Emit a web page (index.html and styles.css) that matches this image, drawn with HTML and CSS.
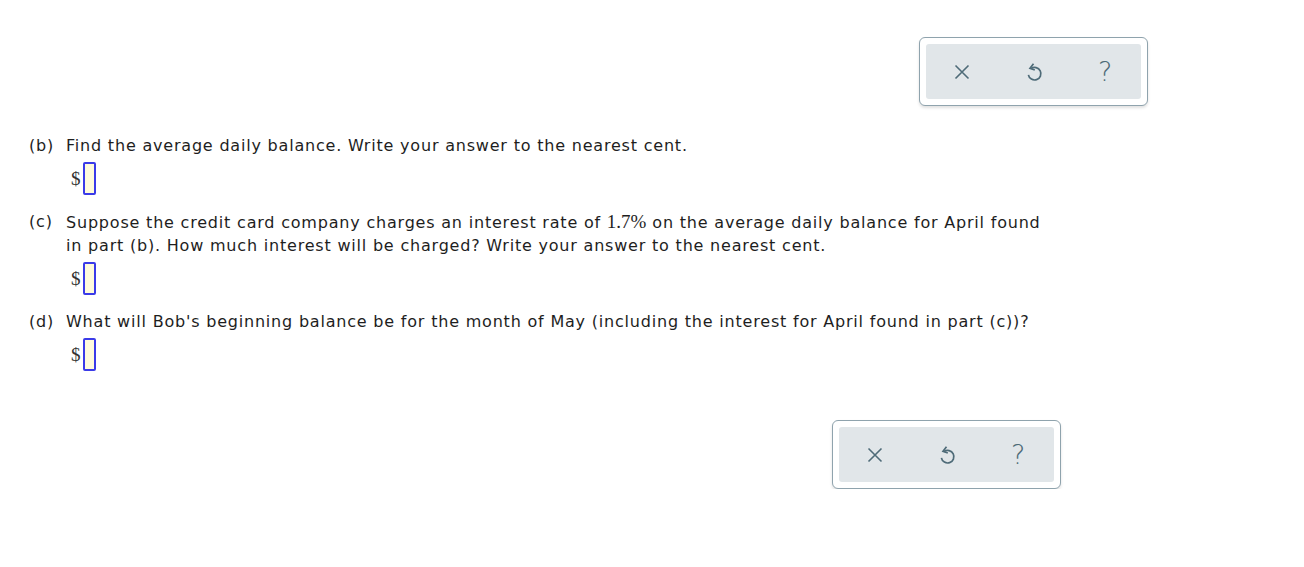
FILE: index.html
```html
<!DOCTYPE html>
<html lang="en">
<head>
    <meta charset="UTF-8">
    <title>Average daily balance</title>
    <link rel="stylesheet" href="styles.css">
</head>
<body>
    <div class="page">
        <div class="tools-row top">
            <div class="tool-panel">
                <div class="tool-bar">
                    <button class="tool-btn" title="Clear">
                        <svg width="16" height="16" viewBox="0 0 16 16"><path d="M1.5 1.5 L14.5 14.5 M14.5 1.5 L1.5 14.5" stroke="#4e6b78" stroke-width="1.6" fill="none"/></svg>
                    </button>
                    <button class="tool-btn" title="Undo">
                        <svg width="18" height="20" viewBox="0 0 18 20"><path d="M6 6.5 A6.3 6.3 0 1 1 3.4 12.8" stroke="#4e6b78" stroke-width="1.7" fill="none"/><path d="M8.5 1.8 L5 6.3 L9.8 8" stroke="#4e6b78" stroke-width="1.7" fill="none"/></svg>
                    </button>
                    <button class="tool-btn help" title="Help">?</button>
                </div>
            </div>
        </div>

        <div class="part">
            <div class="question">
                <span class="label">(b)</span>
                <span class="text">Find the average daily balance. Write your answer to the nearest cent.</span>
            </div>
            <div class="answer"><span class="dollar">$</span><span class="input-box"></span></div>
        </div>

        <div class="part">
            <div class="question">
                <span class="label">(c)</span>
                <span class="text">Suppose the credit card company charges an interest rate of <span class="math">1.7%</span> on the average daily balance for April found in part (b). How much interest will be charged? Write your answer to the nearest cent.</span>
            </div>
            <div class="answer"><span class="dollar">$</span><span class="input-box"></span></div>
        </div>

        <div class="part">
            <div class="question">
                <span class="label">(d)</span>
                <span class="text">What will Bob's beginning balance be for the month of May (including the interest for April found in part (c))?</span>
            </div>
            <div class="answer"><span class="dollar">$</span><span class="input-box"></span></div>
        </div>

        <div class="tools-row bottom">
            <div class="tool-panel">
                <div class="tool-bar">
                    <button class="tool-btn" title="Clear">
                        <svg width="16" height="16" viewBox="0 0 16 16"><path d="M1.5 1.5 L14.5 14.5 M14.5 1.5 L1.5 14.5" stroke="#4e6b78" stroke-width="1.6" fill="none"/></svg>
                    </button>
                    <button class="tool-btn" title="Undo">
                        <svg width="18" height="20" viewBox="0 0 18 20"><path d="M6 6.5 A6.3 6.3 0 1 1 3.4 12.8" stroke="#4e6b78" stroke-width="1.7" fill="none"/><path d="M8.5 1.8 L5 6.3 L9.8 8" stroke="#4e6b78" stroke-width="1.7" fill="none"/></svg>
                    </button>
                    <button class="tool-btn help" title="Help">?</button>
                </div>
            </div>
        </div>
    </div>
</body>
</html>
```

FILE: styles.css
```css
/* Question page */
body {
    margin: 0;
    background-color: #fff;
    font-family: "DejaVu Sans", Verdana, sans-serif;
    font-size: 16px;
    letter-spacing: 0.8px;
    color: #1e1e1e;
}

.page {
    padding: 0 0 0 29px;
}

.tools-row {
    display: flex;
}

.tools-row.top {
    padding: 37px 0 0 890px;
    margin-bottom: 28px;
}

.tools-row.bottom {
    padding: 34px 0 0 803px;
}

.tool-panel {
    width: 229px;
    height: 69px;
    padding: 6px;
    box-sizing: border-box;
    border: 1px solid #8fa3ad;
    border-radius: 6px;
    box-shadow: 0 2px 3px rgba(0, 0, 0, 0.12);
    background-color: #fff;
}

.tool-bar {
    height: 100%;
    background-color: #e1e6e9;
    border-radius: 3px;
    display: flex;
    align-items: center;
}

.tool-btn {
    flex: 1;
    border: none;
    background: none;
    padding: 0;
    height: 30px;
    display: flex;
    align-items: center;
    justify-content: center;
}

.tool-btn.help {
    font-family: "DejaVu Sans", sans-serif;
    font-size: 27px;
    font-weight: 200;
    letter-spacing: 0;
    color: #4e6b78;
}

.part {
    margin-bottom: 15px;
}

.question {
    display: flex;
    line-height: 23px;
}

.question .label {
    flex: 0 0 37px;
}

.question .text {
    width: 995px;
}

.math {
    font-family: "Liberation Serif", "Times New Roman", serif;
    font-size: 19px;
    letter-spacing: 0;
}

.answer {
    display: flex;
    align-items: center;
    padding: 5px 0 0 42px;
}

.dollar {
    font-family: "Liberation Serif", "Times New Roman", serif;
    font-size: 19px;
    letter-spacing: 0;
    color: #333;
    margin-right: 2px;
}

.input-box {
    display: inline-block;
    width: 9px;
    height: 29px;
    border: 2px solid #3b3be8;
    border-radius: 2px;
    background-color: #fffbdc;
}
```
